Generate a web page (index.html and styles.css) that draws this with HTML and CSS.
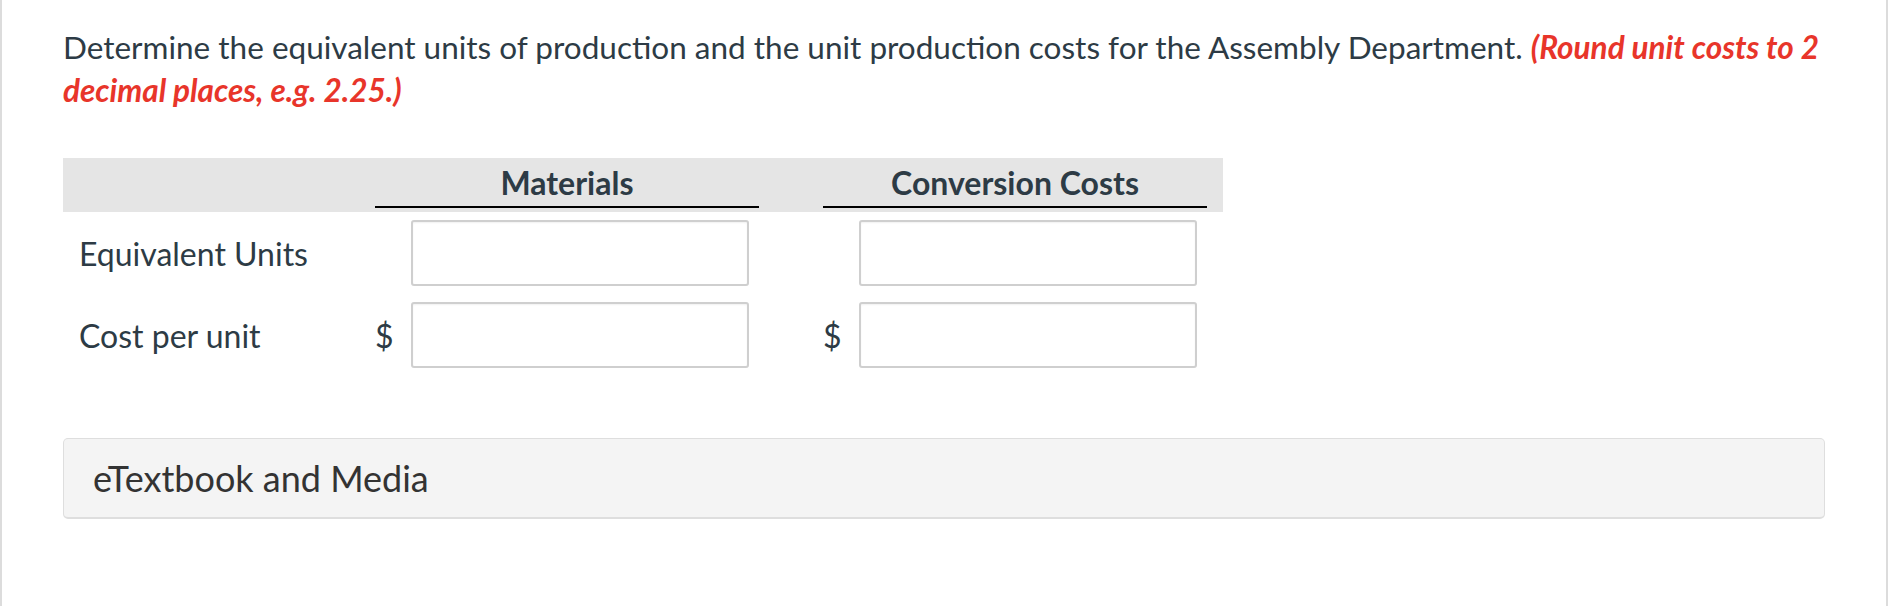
FILE: index.html
```html
<!DOCTYPE html>
<html lang="en">
<head>
<meta charset="utf-8">
<title>Assembly Department</title>
<link rel="stylesheet" href="styles.css">
</head>
<body>
<div class="page">
  <p class="question">Determine the equivalent units of production and the unit production costs for the Assembly Department. <em class="hint">(Round unit costs to 2 decimal places, e.g. 2.25.)</em></p>

  <div class="table">
    <div class="head">
      <div class="head-label"></div>
      <div class="head-col"><span>Materials</span></div>
      <div class="head-col"><span>Conversion Costs</span></div>
    </div>
    <div class="row">
      <div class="label">Equivalent Units</div>
      <div class="cell"><span class="cur"></span><input class="field" type="text"></div>
      <div class="cell"><span class="cur"></span><input class="field" type="text"></div>
    </div>
    <div class="row">
      <div class="label">Cost per unit</div>
      <div class="cell"><span class="cur">$</span><input class="field" type="text"></div>
      <div class="cell"><span class="cur">$</span><input class="field" type="text"></div>
    </div>
  </div>

  <div class="media">eTextbook and Media</div>
</div>
</body>
</html>
```

FILE: styles.css
```css
* { box-sizing: border-box; }
html, body { margin: 0; padding: 0; background: #fff; }
body { font-family: Lato, "Open Sans", sans-serif; color: #2d3b45; }

.page {
  width: 1888px;
  height: 606px;
  border-left: 2px solid #dcdcdc;
  border-right: 2px solid #dcdcdc;
  padding: 26px 61px 0 61px;
}

.question {
  margin: 0;
  font-size: 31.5px;
  line-height: 43px;
  width: 1762px;
}
.hint {
  color: #e8352a;
  font-weight: 700;
  font-style: italic;
}

.table {
  margin-top: 46px;
  width: 1160px;
}
.head,
.row {
  display: grid;
  grid-template-columns: 248px 384px 384px;
  column-gap: 64px;
  padding-right: 16px;
}
.head {
  height: 54px;
  background: #e5e5e5;
}
.head-col {
  display: flex;
  align-items: flex-end;
  padding-bottom: 4px;
}
.head-col span {
  display: block;
  width: 100%;
  text-align: center;
  font-weight: 700;
  font-size: 32px;
  line-height: 46px;
  border-bottom: 2px solid #000;
}

.row {
  align-items: center;
  margin-top: 8px;
  height: 66px;
}
.row + .row { margin-top: 16px; }
.label {
  padding-left: 16px;
  font-size: 32px;
  white-space: nowrap;
}
.cell {
  display: flex;
  align-items: center;
}
.cur {
  width: 36px;
  padding-right: 18px;
  text-align: right;
  font-size: 32px;
}
.field {
  width: 338px;
  height: 66px;
  border: 2px solid #cfcfcf;
  border-radius: 3px;
  background: #fff;
  box-shadow: inset 0 1px 2px rgba(0,0,0,0.06);
  margin: 0;
  padding: 0 10px;
  font: inherit;
}

.media {
  margin-top: 70px;
  width: 1762px;
  height: 81px;
  background: #f4f4f4;
  border: 1px solid #dedede;
  border-bottom-width: 2px;
  border-radius: 5px;
  padding-left: 29px;
  display: flex;
  align-items: center;
  font-size: 36px;
  color: #333;
}
```
